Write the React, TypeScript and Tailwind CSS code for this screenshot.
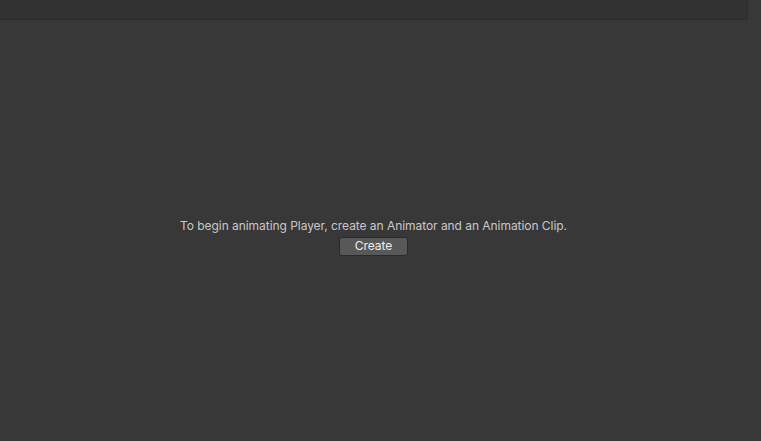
export default function App() {
	return (
		<div
			className="flex h-[441px] w-[761px] flex-col bg-[#383838] text-[12px] text-[#c8c8c8]"
			style={{ fontFamily: "Inter, 'Noto Sans', sans-serif" }}
		>
			{/* toolbar strip */}
			<div className="flex h-[20px] w-[748px] shrink-0 border-r border-b border-[#2c2c2c] bg-[#323232]" />

			{/* empty state */}
			<div className="flex w-[747px] flex-1 flex-col items-center justify-center pt-[13px]">
				<p className="leading-[14px] tracking-[-0.05px]">
					To begin animating Player, create an Animator and an Animation Clip.
				</p>
				<button className="mt-[4px] h-[19px] w-[69px] rounded-[3px] border border-[#2a2a2a] bg-[#585858] text-[12px] leading-none text-[#eeeeee]">
					Create
				</button>
			</div>
		</div>
	);
}
